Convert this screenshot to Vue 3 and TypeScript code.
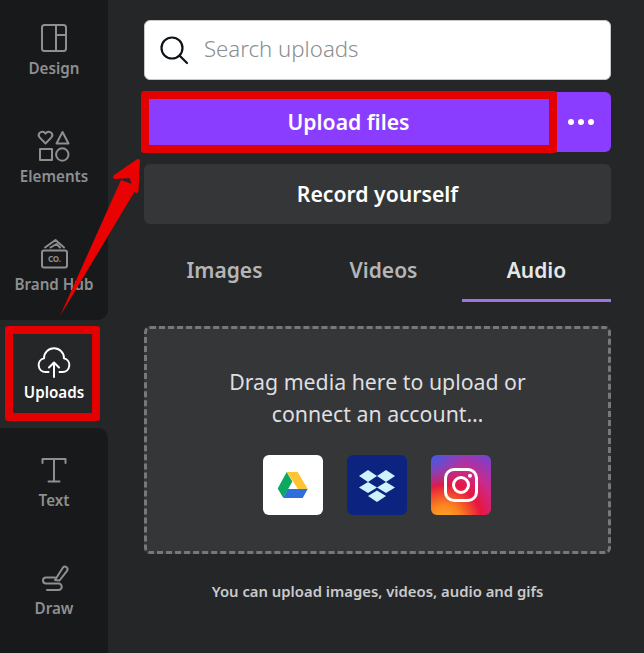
<script setup lang="ts">
const topItems = ["Design", "Elements", "Brand Hub"];
const bottomItems = ["Text", "Draw"];
const tabs = ["Images", "Videos", "Audio"];
</script>

<template>
  <div class="screen">
    <nav class="sidebar">
      <div class="group group-top">
        <div v-for="name in topItems" :key="name" class="item">
          <svg class="icon" viewBox="0 0 36 36" width="36" height="36">
            <g v-if="name === 'Design'">
              <rect x="6" y="5" width="24" height="26" rx="2.5" />
              <path d="M20 5V31M20 15H30" />
            </g>
            <g v-else-if="name === 'Elements'">
              <path d="M9.5 15.5L3.6 9.4A3.4 3.4 0 0 1 3.6 4.9A3.6 3.6 0 0 1 9.5 5.6A3.6 3.6 0 0 1 15.4 4.9A3.4 3.4 0 0 1 15.4 9.4Z" />
              <path d="M26.5 4L32.5 15.5H20.5Z" />
              <rect x="4" y="21" width="12" height="11" />
              <circle cx="26.3" cy="26.5" r="6.2" />
            </g>
            <g v-else>
              <rect x="6" y="14.5" width="25" height="17" rx="2" />
              <path d="M9 11.5L19.5 4L28 11.5M14.5 11.5L20.5 8L24 11.5" />
              <text x="18.5" y="26" class="co">CO.</text>
            </g>
          </svg>
          <span class="label">{{ name }}</span>
        </div>
      </div>

      <div class="item active">
        <svg class="icon" viewBox="0 0 36 36" width="36" height="36">
          <path d="M12.5 28H9.5A7 7 0 0 1 8 14.2A10 10 0 0 1 28 14.2A7 7 0 0 1 26.5 28H23.5" />
          <path d="M18 33V18.5M13 23.5L18 18.5L23 23.5" />
        </svg>
        <span class="label">Uploads</span>
      </div>

      <div class="group group-bottom">
        <div v-for="name in bottomItems" :key="name" class="item">
          <svg class="icon" viewBox="0 0 36 36" width="36" height="36">
            <path v-if="name === 'Text'" d="M6.5 11V7H29.5V11M18 7V29.5M12.5 29.5H23.5" />
            <g v-else>
              <path d="M19 20L27 7.5A2.6 2.6 0 0 1 31 10.8L23.5 20.5Z" />
              <path d="M19 17.5H10A3 3 0 0 0 10 23.5H22.5A3 3 0 0 1 22.5 30H11" />
            </g>
          </svg>
          <span class="label">{{ name }}</span>
        </div>
      </div>
    </nav>

    <main class="panel">
      <div class="search">
        <svg viewBox="0 0 30 30" width="30" height="30">
          <circle cx="13" cy="13" r="10.5" />
          <path d="M20.5 20.5L28 28" />
        </svg>
        <span>Search uploads</span>
      </div>

      <div class="upload-row">
        <button class="upload">Upload files</button>
        <button class="more"><i></i><i></i><i></i></button>
      </div>

      <button class="record">Record yourself</button>

      <div class="tabs">
        <div v-for="tab in tabs" :key="tab" class="tab" :class="{ selected: tab === 'Audio' }">{{ tab }}</div>
      </div>

      <section class="drop">
        <p>Drag media here to upload or<br />connect an account…</p>
        <div class="sources">
          <div class="source drive">
            <svg viewBox="0 0 60 60" width="60" height="60">
              <polygon points="23.7,17 29.3,26.5 20.3,43 14.7,33.5" fill="#0da960" />
              <polygon points="23.7,17 34.7,17 44.7,34 35,34" fill="#ffc431" />
              <polygon points="24.7,34 44.7,34 39.7,43 20.3,43" fill="#2d6fdd" />
            </svg>
          </div>
          <div class="source dropbox">
            <svg viewBox="0 0 60 60" width="60" height="60">
              <polygon points="21,15 30,21 21,27 12,21" />
              <polygon points="39,15 48,21 39,27 30,21" />
              <polygon points="21,27 30,32.5 21,38 12,32.5" />
              <polygon points="39,27 48,32.5 39,38 30,32.5" />
              <polygon points="30,35.5 39,41 30,47 21,41" />
            </svg>
          </div>
          <div class="source instagram">
            <svg viewBox="0 0 60 60" width="60" height="60">
              <rect x="14.5" y="14.5" width="31" height="31" rx="8.5" />
              <circle cx="30" cy="30" r="7.5" />
              <circle class="dot" cx="39" cy="20.8" r="2" />
            </svg>
          </div>
        </div>
      </section>

      <p class="hint">You can upload images, videos, audio and gifs</p>
    </main>

    <!-- annotations drawn over the screenshot -->
    <div class="mark mark-upload"></div>
    <div class="mark mark-sidebar"></div>
    <svg class="arrow" viewBox="0 0 644 653" width="644" height="653">
      <polygon points="60,316 121,180 138,186" />
      <path class="head" d="M115 177L138 161L136.5 191L131 176Z" />
    </svg>
  </div>
</template>

<style scoped>
.screen {
  position: relative;
  display: flex;
  width: 644px;
  height: 653px;
  overflow: hidden;
  background: #252627;
  font-family: "Noto Sans", "Liberation Sans", sans-serif;
  color: #fff;
}

.sidebar {
  flex: none;
  width: 108px;
  margin-top: -4px;
}

.group {
  background: #18191b;
}

.group-top {
  border-bottom-right-radius: 10px;
}

.group-bottom {
  border-top-right-radius: 10px;
  height: 340px;
}

.item {
  display: flex;
  flex-direction: column;
  align-items: center;
  gap: 4px;
  height: 108px;
  box-sizing: border-box;
  padding-top: 24px;
}

.icon {
  fill: none;
  stroke: #8e8f91;
  stroke-width: 2;
  stroke-linecap: round;
  stroke-linejoin: round;
}

.co {
  fill: #8e8f91;
  stroke: none;
  font-size: 8px;
  font-weight: 700;
  text-anchor: middle;
}

.label {
  font-size: 15.2px;
  line-height: 16px;
  font-weight: 600;
  color: #8e8f91;
  white-space: nowrap;
}

.active .icon {
  stroke: #fff;
}

.active .label {
  color: #fff;
}

.panel {
  flex: 1;
  display: flex;
  flex-direction: column;
  padding: 20px 33px 0 36px;
}

.search {
  display: flex;
  align-items: center;
  gap: 15px;
  height: 60px;
  box-sizing: border-box;
  padding-left: 14px;
  background: #fff;
  border: 1px solid #c4c6c8;
  border-radius: 6px;
  color: #8b8e91;
  font-size: 22.2px;
  font-weight: 300;
}

.search span {
  margin-bottom: 4px;
}

.search svg {
  fill: none;
  stroke: #0e1318;
  stroke-width: 2.2;
  stroke-linecap: round;
}

.upload-row {
  display: flex;
  height: 60px;
  margin-top: 12px;
  border-radius: 6px;
  overflow: hidden;
  background: #8b3dff;
}

button {
  border: 0;
  padding: 0;
  font: inherit;
  color: inherit;
}

.upload,
.record {
  font-size: 21.2px;
  font-weight: 600;
  padding-bottom: 2px;
}

.upload {
  flex: 1;
  padding-right: 3px;
  background: transparent;
}

.more {
  display: flex;
  align-items: center;
  justify-content: center;
  gap: 4px;
  width: 55px;
  padding-right: 5px;
  background: transparent;
}

.more i {
  width: 6px;
  height: 6px;
  border-radius: 50%;
  background: #fff;
}

.record {
  height: 60px;
  margin-top: 12px;
  background: #353638;
  border-radius: 6px;
}

.tabs {
  display: grid;
  grid-template-columns: 161px 149px 149px;
  gap: 4px;
  height: 78px;
}

.tab {
  display: flex;
  align-items: center;
  justify-content: center;
  box-sizing: border-box;
  padding: 20px 0 4px;
  border-bottom: 3px solid transparent;
  font-size: 21px;
  font-weight: 600;
  color: #b4b5b7;
}

.selected {
  color: #e6e6e7;
  border-bottom-color: #9c74e8;
}

.drop {
  display: flex;
  flex-direction: column;
  align-items: center;
  box-sizing: border-box;
  height: 228px;
  margin-top: 24px;
  padding-top: 37px;
  background: #353638;
  border: 3px dashed #77787b;
  border-radius: 6px;
}

.drop p {
  margin: 0;
  font-size: 21.3px;
  line-height: 32px;
  text-align: center;
  color: #dfdfe0;
}

.sources {
  display: flex;
  gap: 24px;
  margin: 25px 2px 0 0;
}

.source {
  width: 60px;
  height: 60px;
  border-radius: 6px;
  overflow: hidden;
}

.drive {
  background: #fff;
}

.dropbox {
  background: #0c2480;
  fill: #cdf3ff;
}

.instagram {
  background:
    radial-gradient(circle at 0 0, #3f5ce8 0, rgba(63, 92, 232, 0) 40%),
    radial-gradient(circle at 22% 112%, #fdb52c 0, #f9821f 22%, #e8163f 46%, #c92a8c 68%, #8a3cc0 90%, #4f55dc 108%);
  fill: none;
  stroke: #fff;
  stroke-width: 3;
}

.instagram .dot {
  fill: #fff;
  stroke: none;
}

.hint {
  margin: 27px 0 0;
  font-size: 14.85px;
  line-height: 20px;
  font-weight: 600;
  text-align: center;
  color: #c9cacc;
}

.mark {
  position: absolute;
  box-sizing: border-box;
  border: 8px solid #e30000;
  border-radius: 3px;
}

.mark-upload {
  left: 141px;
  top: 91px;
  width: 416px;
  height: 62px;
}

.mark-sidebar {
  left: 5px;
  top: 326px;
  width: 95px;
  height: 95px;
}

.arrow {
  position: absolute;
  left: 0;
  top: 0;
  fill: #ea0202;
  pointer-events: none;
}

.head {
  stroke: #ea0202;
  stroke-width: 4;
  stroke-linejoin: round;
}
</style>
<style>
html,
body {
  margin: 0;
  background: #252627;
}
</style>
